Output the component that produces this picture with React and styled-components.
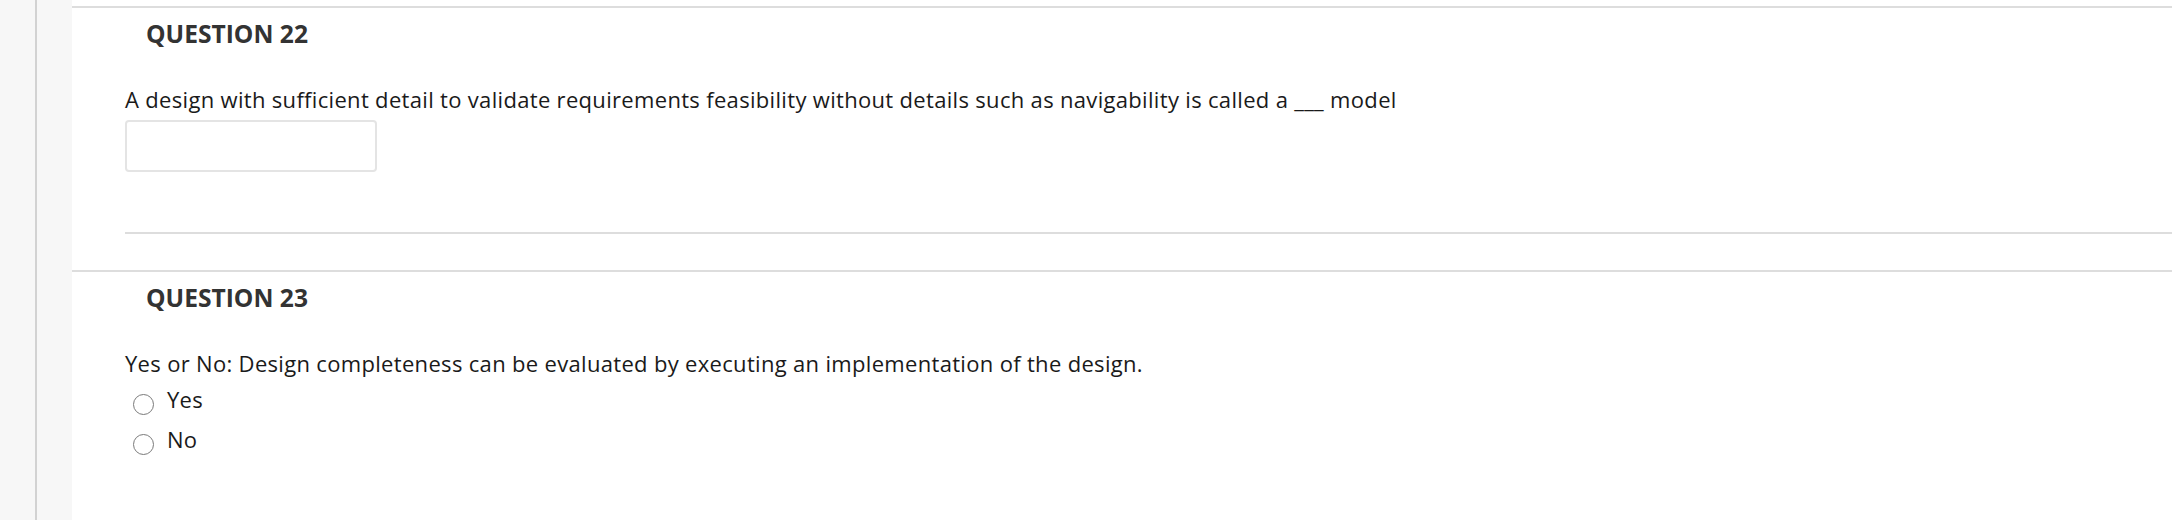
import styled, { createGlobalStyle } from "styled-components";

const GlobalStyle = createGlobalStyle`
  html, body {
    margin: 0;
    padding: 0;
    background: #ffffff;
  }

  body {
    font-family: "Open Sans", "Noto Sans", "Liberation Sans", sans-serif;
  }
`;

const questions = [
  {
    id: 22,
    text: "A design with sufficient detail to validate requirements feasibility without details such as navigability is called a ___ model",
    kind: "fill",
  },
  {
    id: 23,
    text: "Yes or No: Design completeness can be evaluated by executing an implementation of the design.",
    kind: "choice",
    options: ["Yes", "No"],
  },
];

const App = () => {
  return (
    <>
      <GlobalStyle />
      <Page>
        <Sidebar>
          <Rail />
        </Sidebar>
        <Main>
          {questions.map((q) => (
            <Question key={q.id}>
              <Heading>QUESTION {q.id}</Heading>
              <Body>
                <Prompt>{q.text}</Prompt>
                {q.kind === "fill" ? (
                  <>
                    <AnswerInput type="text" />
                    <Divider />
                  </>
                ) : (
                  <Options>
                    {q.options.map((opt) => (
                      <Option key={opt}>
                        <Radio type="radio" name={`q${q.id}`} />
                        <OptionLabel>{opt}</OptionLabel>
                      </Option>
                    ))}
                  </Options>
                )}
              </Body>
            </Question>
          ))}
        </Main>
      </Page>
    </>
  );
};

const Page = styled.div`
  display: flex;
  flex-direction: row;
  min-height: 100vh;
`;

const Sidebar = styled.aside`
  width: 72px;
  flex-shrink: 0;

  background: #f7f7f7;
`;

const Rail = styled.div`
  width: 35px;
  height: 100%;

  border-right: 2px solid #d2d2d2;
`;

const Main = styled.main`
  flex: 1;
  padding-top: 6px;
`;

const Question = styled.section`
  border-top: 2px solid #dddddd;
`;

const Heading = styled.h2`
  margin: 0;
  padding: 10px 0 0 74px;

  font-size: 24.6px;
  font-weight: 700;
  line-height: 32px;

  color: #333333;
`;

const Body = styled.div`
  padding: 35px 0 36px 53px;
`;

const Prompt = styled.div`
  font-size: 22px;
  letter-spacing: 0.32px;
  line-height: 28px;

  color: #1a1a1a;
`;

const AnswerInput = styled.input`
  display: block;
  box-sizing: border-box;
  width: 252px;
  height: 52px;
  margin-top: 7px;

  border: 2px solid #e4e4e4;
  border-radius: 4px;
  background: #ffffff;
  outline: none;
`;

const Divider = styled.hr`
  height: 2px;
  margin: 60px 0 0 0;

  border: none;
  background-color: #dddddd;
`;

const Options = styled.div`
  display: flex;
  flex-direction: column;
  gap: 12px;
  margin-top: 8px;
`;

const Option = styled.label`
  display: flex;
  flex-direction: row;
  align-items: flex-start;
  height: 28px;
`;

const Radio = styled.input`
  appearance: none;
  box-sizing: border-box;
  width: 21px;
  height: 21px;
  margin: 9px 0 0 8px;

  border: 1.5px solid #7a7a7a;
  border-radius: 50%;
  background: #ffffff;
`;

const OptionLabel = styled.span`
  margin-left: 13px;

  font-size: 22px;
  letter-spacing: 0.3px;
  line-height: 28px;

  color: #1a1a1a;
`;

export default App;
